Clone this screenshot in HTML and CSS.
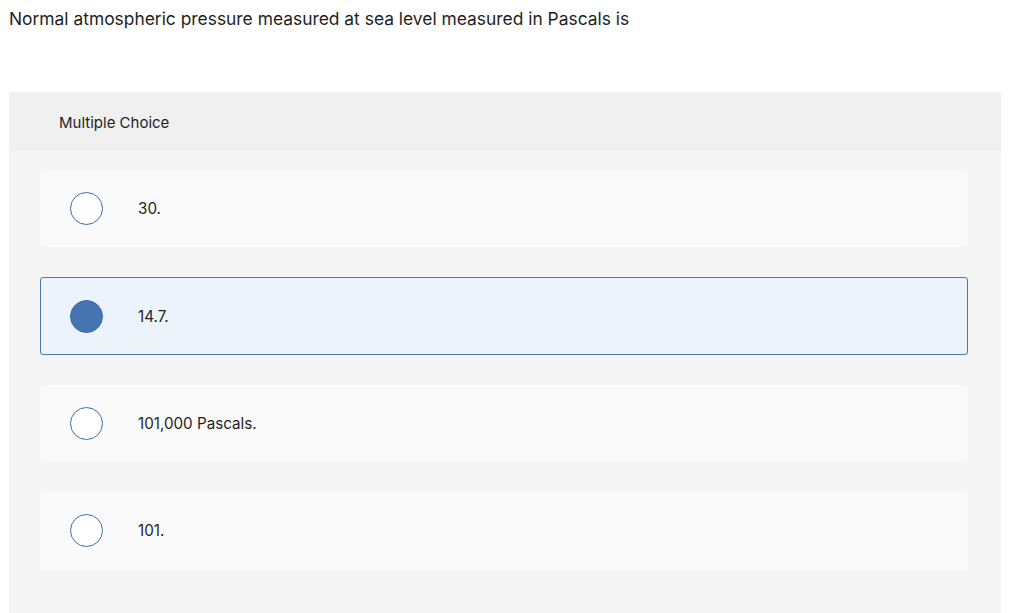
FILE: index.html
```html
<!DOCTYPE html>
<html>
<head>
<meta charset="utf-8">
<link rel="stylesheet" href="styles.css">
</head>
<body>
<p class="question">Normal atmospheric pressure measured at sea level measured in Pascals is</p>
<div class="card">
  <div class="card-head">Multiple Choice</div>
  <div class="card-body">
    <div class="option"><span class="radio"></span><span class="label">30.</span></div>
    <div class="option selected"><span class="radio"></span><span class="label">14.7.</span></div>
    <div class="option"><span class="radio"></span><span class="label">101,000 Pascals.</span></div>
    <div class="option"><span class="radio"></span><span class="label">101.</span></div>
  </div>
</div>
</body>
</html>
```
FILE: styles.css
```css
html, body {
  margin: 0;
  padding: 0;
  background: #ffffff;
}
body {
  font-family: Inter, "Liberation Sans", sans-serif;
  color: #1f1f1f;
  padding: 0 23px 0 9px;
}
.question {
  margin: 0;
  padding-top: 8px;
  font-size: 17.4px;
  line-height: 22px;
  height: 84px;
}
.card {
  background: #f5f5f5;
  border-radius: 3px 3px 0 0;
  height: 521px;
  overflow: hidden;
}
.card-head {
  background: #f0f0f0;
  height: 59px;
  box-sizing: border-box;
  padding: 21px 0 0 50px;
  font-size: 15px;
  line-height: 19px;
}
.card-body {
  padding: 19px 33px 0 31px;
  display: flex;
  flex-direction: column;
  gap: 30px;
}
.option {
  height: 77.4px;
  box-sizing: border-box;
  background: #fafafa;
  border: 1px solid #fafafa;
  border-radius: 3px;
  display: flex;
  align-items: center;
  padding-left: 29px;
}
.option.selected {
  background: #edf3fb;
  border-color: #4a77b4;
}
.radio {
  width: 33px;
  height: 33px;
  box-sizing: border-box;
  border-radius: 50%;
  border: 1.5px solid #3e6ea6;
  background: #ffffff;
  flex: none;
}
.selected .radio {
  background: #4673b2;
  border-color: #3b67a3;
}
.label {
  margin-left: 35px;
  font-size: 15.2px;
}
```
